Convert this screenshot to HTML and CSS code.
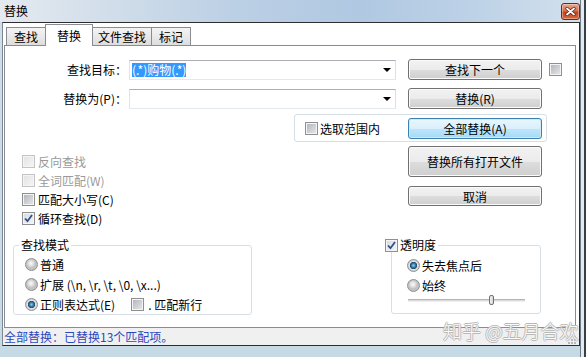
FILE: index.html
```html
<!DOCTYPE html>
<html lang="zh-CN">
<head>
    <meta charset="UTF-8">
    <meta name="viewport" content="width=device-width, initial-scale=1.0">
    <title>替换</title>
    <link rel="stylesheet" href="styles.css">
</head>
<body>

    <div class="window">
        <!-- Title bar -->
        <div class="titlebar">
            <span class="title">替换</span>
            <span class="close">
                <svg width="11" height="9" viewBox="0 0 11 9">
                    <path d="M2 1.5 L9 7.5 M9 1.5 L2 7.5" stroke="#5a1c10" stroke-width="3.2" stroke-linecap="round"/>
                    <path d="M2 1.5 L9 7.5 M9 1.5 L2 7.5" stroke="#ffffff" stroke-width="1.8" stroke-linecap="round"/>
                </svg>
            </span>
        </div>

        <div class="client">
            <!-- Tabs -->
            <div class="tabs">
                <span class="tab">查找</span>
                <span class="tab active">替换</span>
                <span class="tab wide">文件查找</span>
                <span class="tab">标记</span>
            </div>

            <div class="panel">
                <div class="row">
                    <span class="field-label">查找目标：</span>
                    <div class="combo"><span class="selected">(.*)购物(.*)</span><span class="arrow"></span></div>
                    <button class="btn">查找下一个</button>
                    <span class="check"></span>
                </div>
                <div class="row second">
                    <span class="field-label">替换为(P)：</span>
                    <div class="combo"><span class="arrow"></span></div>
                    <button class="btn">替换(R)</button>
                </div>

                <div class="scope">
                    <span class="check"></span>
                    <span class="scope-text">选取范围内</span>
                    <button class="btn default">全部替换(A)</button>
                </div>

                <div class="middle">
                    <div class="options">
                        <div class="opt disabled"><span class="check"></span>反向查找</div>
                        <div class="opt disabled"><span class="check"></span>全词匹配(W)</div>
                        <div class="opt"><span class="check"></span>匹配大小写(C)</div>
                        <div class="opt"><span class="check on"><svg width="9" height="9" viewBox="0 0 9 9"><path d="M1 4.5 L3.5 7.2 L8 1" fill="none" stroke="#2f4d92" stroke-width="1.8"/></svg></span>循环查找(D)</div>
                    </div>
                    <div class="actions">
                        <button class="btn tall">替换所有打开文件</button>
                        <button class="btn short">取消</button>
                    </div>
                </div>

                <div class="groups">
                    <fieldset class="group mode">
                        <legend>查找模式</legend>
                        <div class="radio-row"><span class="radio"></span>普通</div>
                        <div class="radio-row"><span class="radio"></span>扩展 (\n, \r, \t, \0, \x...)</div>
                        <div class="radio-row"><span class="radio on"></span>正则表达式(E)<span class="check newline"></span>. 匹配新行</div>
                    </fieldset>

                    <fieldset class="group opacity">
                        <legend><span class="check on"><svg width="9" height="9" viewBox="0 0 9 9"><path d="M1 4.5 L3.5 7.2 L8 1" fill="none" stroke="#2f4d92" stroke-width="1.8"/></svg></span>透明度</legend>
                        <div class="radio-row"><span class="radio on"></span>失去焦点后</div>
                        <div class="radio-row"><span class="radio"></span>始终</div>
                        <div class="slider">
                            <span class="track"></span>
                            <span class="thumb"></span>
                        </div>
                    </fieldset>
                </div>
            </div>

            <!-- Status line -->
            <div class="status">
                <span class="status-text">全部替换：已替换13个匹配项。</span>
                <svg class="grip" width="9" height="9" viewBox="0 0 9 9">
                    <rect x="7" y="1" width="2" height="2" fill="#b8b8b8"/>
                    <rect x="4" y="4" width="2" height="2" fill="#b8b8b8"/>
                    <rect x="7" y="4" width="2" height="2" fill="#b8b8b8"/>
                    <rect x="1" y="7" width="2" height="2" fill="#b8b8b8"/>
                    <rect x="4" y="7" width="2" height="2" fill="#b8b8b8"/>
                    <rect x="7" y="7" width="2" height="2" fill="#b8b8b8"/>
                </svg>
            </div>
        </div>

        <div class="watermark">知乎 @五月合欢</div>
    </div>

    <div class="behind"></div>

</body>
</html>
```

FILE: styles.css
```css
/* General Styles */
body {
    margin: 0;
    width: 586px;
    height: 357px;
    overflow: hidden;
    display: flex;
    font-family: "Noto Sans CJK SC", "Noto Sans", sans-serif;
    font-size: 12px;
    color: #000;
    background-color: #c7dbe7;
}

button {
    font: inherit;
    color: #000;
    padding: 0;
}

/* Window frame */
.window {
    width: 580px;
    height: 357px;
    position: relative;
    display: flex;
    flex-direction: column;
    background: linear-gradient(180deg, #cfdeea, #c6dae6);
}

.titlebar {
    height: 22px;
    display: flex;
    align-items: flex-start;
    justify-content: space-between;
    background: linear-gradient(90deg, #e4eaf0 0%, #d2deea 18%, #bcd0e5 40%, #b0c8e2 62%, #bdd2e7 82%, #d3e0ec 100%);
}

.title {
    padding: 4px 0 0 4px;
    line-height: 13px;
}

.close {
    width: 19px;
    height: 17px;
    margin-top: 3px;
    box-sizing: border-box;
    border: 1px solid #6a2a1e;
    border-radius: 3px;
    background: linear-gradient(180deg, #eaa88f 0%, #d9704f 45%, #c5431f 55%, #d7693d 100%);
    box-shadow: inset 0 0 0 1px rgba(255, 255, 255, .35);
    display: flex;
    align-items: center;
    justify-content: center;
}

.client {
    margin-left: 2px;
    height: 324px;
    box-sizing: border-box;
    border: 1px solid #2e2e2e;
    border-left-color: #7d8792;
    background-color: #fff;
    display: flex;
    flex-direction: column;
}

/* Tabs */
.tabs {
    height: 22px;
    display: flex;
    align-items: flex-end;
    padding-left: 3px;
}

.tab {
    height: 18px;
    box-sizing: border-box;
    padding: 0 7px;
    margin-right: -1px;
    border: 1px solid #898c95;
    border-bottom: none;
    display: flex;
    align-items: center;
    background: linear-gradient(180deg, #f4f4f4, #e9e9e9 50%, #dddddd);
}

.tab.wide {
    padding: 0 5px;
}

.tab.active {
    height: 22px;
    padding: 0 11px;
    margin-bottom: -1px;
    position: relative;
    z-index: 1;
    background: #fff;
    align-items: flex-start;
    padding-top: 2px;
}

/* Tab page */
.panel {
    margin-left: 1px;
    width: 572px;
    height: 283px;
    box-sizing: border-box;
    border: 1px solid #898c95;
    padding-top: 13px;
    display: flex;
    flex-direction: column;
}

.row {
    height: 21px;
    display: flex;
    align-items: center;
}

.row.second {
    margin-top: 8px;
}

.field-label {
    width: 122px;
    margin-right: 2px;
    text-align: right;
}

.combo {
    width: 267px;
    height: 20px;
    margin-right: 12px;
    box-sizing: border-box;
    border: 1px solid;
    border-color: #abadb3 #dbdfe6 #e3e9ef #e2e3ea;
    padding-left: 2px;
    display: flex;
    align-items: center;
}

.selected {
    background-color: #3399ff;
    color: #fff;
    line-height: 14px;
}

.arrow {
    margin-left: auto;
    margin-right: 4px;
    width: 0;
    height: 0;
    border-left: 4px solid transparent;
    border-right: 4px solid transparent;
    border-top: 4px solid #000;
}

/* Buttons */
.btn {
    width: 134px;
    height: 21px;
    flex-shrink: 0;
    box-sizing: border-box;
    border: 1px solid #707070;
    border-radius: 3px;
    background: linear-gradient(180deg, #f2f2f2 0%, #ebebeb 50%, #dddddd 51%, #cfcfcf 100%);
    box-shadow: inset 0 0 0 1px #fbfbfb;
}

.row .btn {
    margin-right: 7px;
}

.btn.default {
    border-color: #3c7fb1;
    background: linear-gradient(180deg, #eaf6fd 0%, #d9f0fc 50%, #bee6fd 51%, #a7d9f5 100%);
    box-shadow: inset 0 0 0 1px #c8ecfb;
}

.btn.tall {
    height: 31px;
}

.btn.short {
    height: 20px;
}

/* Check boxes and radios */
.check {
    width: 13px;
    height: 13px;
    flex-shrink: 0;
    box-sizing: border-box;
    border: 1px solid #8e8f8f;
    background: linear-gradient(135deg, #aeb3b9, #e9e9ea);
    box-shadow: inset 0 0 0 1px #f4f4f4;
    display: flex;
    align-items: center;
    justify-content: center;
}

.check.on {
    background: linear-gradient(135deg, #d8dadd, #f4f4f4);
}

.disabled {
    color: #9a9a9a;
}

.disabled .check {
    border-color: #c4c4c4;
    background: linear-gradient(135deg, #e2e2e2, #f6f6f6);
}

.radio {
    width: 13px;
    height: 13px;
    flex-shrink: 0;
    box-sizing: border-box;
    border: 1px solid #8d8f91;
    border-radius: 50%;
    background: radial-gradient(circle closest-side at 45% 40%, #fafafa 0%, #e2e2e2 55%, #c2c2c2 100%);
}

.radio.on {
    background: radial-gradient(circle closest-side, #8fd0f0 0%, #3a7eab 35%, #1a4869 62%, #e6e6e6 70%, #cdcdcd 100%);
}

/* Selection scope */
.scope {
    margin: 5px 0 0 289px;
    width: 253px;
    height: 28px;
    box-sizing: border-box;
    border: 1px solid #d5dfe5;
    border-radius: 3px;
    padding: 0 4px 0 10px;
    display: flex;
    align-items: center;
}

.scope-text {
    margin-left: 2px;
}

.scope .btn {
    margin-left: auto;
}

/* Options and side buttons */
.middle {
    margin-top: 4px;
    display: grid;
    grid-template-columns: 403px 134px;
}

.options {
    padding: 6px 0 0 17px;
}

.opt {
    height: 19px;
    display: flex;
    align-items: center;
    gap: 3px;
}

.actions {
    display: flex;
    flex-direction: column;
    gap: 9px;
}

/* Group boxes */
.groups {
    margin-top: 10px;
    display: flex;
    align-items: flex-start;
}

.group {
    margin: 0;
    min-width: 0;
    box-sizing: border-box;
    border: 1px solid #d5dfe5;
    border-radius: 3px;
}

.group legend {
    line-height: 14px;
    height: 14px;
    padding: 0 2px;
    display: flex;
    align-items: center;
    gap: 2px;
}

.mode {
    margin-left: 8px;
    width: 239px;
    padding: 2px 0 0 11px;
}

.mode legend {
    margin-left: -6px;
}

.opacity {
    margin-left: 139px;
    width: 150px;
    padding: 3px 0 8px 15px;
}

.opacity legend {
    margin-left: -22px;
    padding: 0 2px 0 0;
    background: #fff;
}

.radio-row {
    height: 20px;
    display: flex;
    align-items: center;
    gap: 2px;
}

.check.newline {
    margin: 0 2px 0 14px;
}

/* Trackbar */
.slider {
    position: relative;
    margin-left: 1px;
    width: 117px;
    height: 10px;
    display: flex;
    align-items: center;
}

.track {
    width: 100%;
    height: 3px;
    box-sizing: border-box;
    border-top: 1px solid #b4b4b4;
    border-bottom: 1px solid #eeeeee;
    background: #dcdcdc;
}

.thumb {
    position: absolute;
    left: 81px;
    top: 0;
    width: 5px;
    height: 10px;
    box-sizing: border-box;
    border: 1px solid #707070;
    border-radius: 2px;
    background: linear-gradient(90deg, #f2f2f2, #d6d6d6);
}

/* Status line */
.status {
    height: 17px;
    background-color: #f0f0f0;
    display: flex;
    align-items: center;
    padding-left: 1px;
}

.status-text {
    color: #2a48c0;
}

.grip {
    margin: 5px 3px 0 auto;
}

/* Site watermark over the corner */
.watermark {
    position: absolute;
    left: 443px;
    top: 320px;
    font-size: 19px;
    line-height: 22px;
    font-weight: 300;
    color: #fbfbfb;
    text-shadow: 1px 0 #b8b8b8, -1px 0 #b8b8b8, 0 1px #b8b8b8, 0 -1px #b8b8b8;
    white-space: nowrap;
}

/* Strip of the window behind */
.behind {
    flex: 1;
    background-color: #e3eaf0;
    border-left: 1px solid #6e7a86;
    box-shadow: inset -2px 0 #3a3f45;
}
```
